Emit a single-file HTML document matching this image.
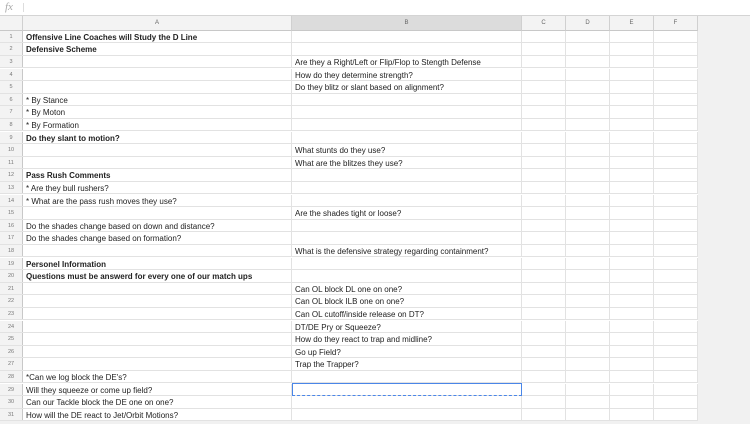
<!DOCTYPE html>
<html><head><style>
body{margin:0;width:750px;height:424px;overflow:hidden;background:#f1f1f1;font-family:"Liberation Sans",Arial,sans-serif;position:relative}
.fb{position:absolute;left:0;top:0;width:750px;height:15px;background:#fff;border-bottom:1px solid #d4d4d4}
.fx{position:absolute;left:5px;top:1px;font:italic 11px "Liberation Serif",serif;color:#aaa}
.fxs{position:absolute;left:23px;top:3px;width:1px;height:9px;background:#ddd}
.grid{position:absolute;left:0;top:16px;width:698px;height:405px;background:#fff}
.ch{position:absolute;top:16px;height:14.7px;background:#f3f3f3;border-right:1px solid #d0d0d0;border-bottom:1px solid #c8c8c8;box-sizing:border-box;font-size:6px;color:#666;text-align:center;line-height:14px}
.row{position:absolute;left:0;width:698px;height:12.6px;border-bottom:1px solid #e2e2e2;box-sizing:border-box}
.rh{position:absolute;left:0;top:0;width:23px;height:100%;background:#f3f3f3;border-right:1px solid #c8c8c8;box-sizing:border-box;font-size:5.5px;color:#777;text-align:center;line-height:13px}
.c{position:absolute;top:0;height:100%;border-right:1px solid #e2e2e2;box-sizing:border-box;font-size:8px;color:#222;line-height:14px;padding-left:3px;white-space:nowrap;overflow:visible}
.b{font-weight:bold}
.sel{position:absolute;left:292px;top:383px;width:230px;height:12.5px;border:1.5px solid #4a86e8;border-bottom-style:dashed;box-sizing:border-box}
</style></head><body>
<div class="fb"><span class="fx">fx</span><div class="fxs"></div></div>
<div class="grid"></div>
<div class="ch" style="left:0;width:23px"></div>
<div class="ch" style="left:23px;width:269px">A</div>
<div class="ch" style="left:292px;width:230px;background:#dcdcdc">B</div>
<div class="ch" style="left:522px;width:44px">C</div>
<div class="ch" style="left:566px;width:44px">D</div>
<div class="ch" style="left:610px;width:44px">E</div>
<div class="ch" style="left:654px;width:44px">F</div>
<div id="rows"></div>
<script>
var d=[
["Offensive Line Coaches will Study the D Line","",1],
["Defensive Scheme","",1],
["","Are they a Right/Left or Flip/Flop to Stength Defense"],
["","How do they determine strength?"],
["","Do they blitz or slant based on alignment?"],
["* By Stance",""],
["* By Moton",""],
["* By Formation",""],
["Do they slant to motion?","",1],
["","What stunts do they use?"],
["","What are the blitzes they use?"],
["Pass Rush Comments","",1],
["* Are they bull rushers?",""],
["* What are the pass rush moves they use?",""],
["","Are the shades tight or loose?"],
["Do the shades change based on down and distance?",""],
["Do the shades change based on formation?",""],
["","What is the defensive strategy regarding containment?"],
["Personel Information","",1],
["Questions must be answerd for every one of our match ups","",1],
["","Can OL block DL one on one?"],
["","Can  OL block ILB one on one?"],
["","Can OL cutoff/inside release on DT?"],
["","DT/DE Pry or Squeeze?"],
["","How do they react to trap and midline?"],
["","Go up Field?"],
["","Trap the Trapper?"],
["*Can we log block the DE's?",""],
["Will they squeeze or come up field?",""],
["Can our Tackle block the DE one on one?",""],
["How will the DE react to Jet/Orbit Motions?",""]];
var h="";
for(var i=0;i<d.length;i++){var t=30.7+i*12.6;
h+='<div class="row" style="top:'+t+'px"><div class="rh">'+(i+1)+'</div>'+
'<div class="c'+(d[i][2]?' b':'')+'" style="left:23px;width:269px">'+d[i][0]+'</div>'+
'<div class="c" style="left:292px;width:230px">'+d[i][1]+'</div>'+
'<div class="c" style="left:522px;width:44px"></div><div class="c" style="left:566px;width:44px"></div><div class="c" style="left:610px;width:44px"></div><div class="c" style="left:654px;width:44px"></div></div>';}
document.getElementById("rows").innerHTML=h;
</script>
<div class="sel"></div>
</body></html>
